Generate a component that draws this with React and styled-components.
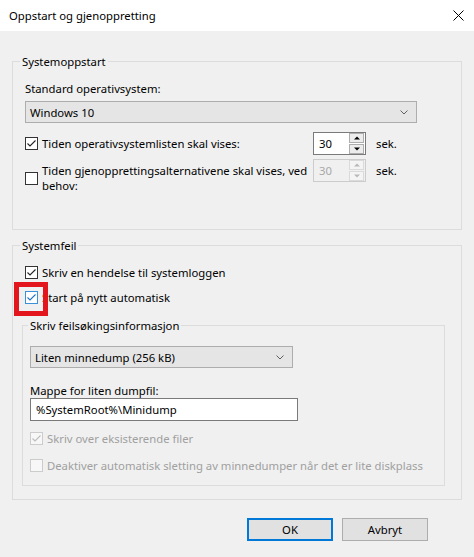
import React from 'react'
import styled, { createGlobalStyle } from 'styled-components'

const GlobalStyle = createGlobalStyle`
  html, body {
    margin: 0;
    padding: 0;
    background: #f0f0f0;
  }
  body {
    font-family: "Noto Sans", "Open Sans", sans-serif;
    font-size: 11.3px;
    color: #000;
  }
  * { box-sizing: border-box; }
`

const Window = styled.div`
  width: 474px;
  height: 557px;
  display: flex;
  flex-direction: column;
  background: #f0f0f0;
  overflow: hidden;
`

const TitleBar = styled.div`
  height: 31px;
  flex: none;
  background: #fff;
  display: flex;
  align-items: center;
  justify-content: space-between;
  padding: 0 10px 0 9px;
`

const Title = styled.span`
  line-height: 15px;
`

const Body = styled.div`
  padding: 23px 12px 0;
  display: flex;
  flex-direction: column;
`

const Group = styled.fieldset`
  margin: ${p => p.$margin || '0'};
  padding: 0;
  min-width: 0;
  border: 1px solid #dcdcdc;
`

const Legend = styled.legend`
  margin-left: ${p => p.$offset}px;
  padding: 0 2px;
  line-height: 15px;
`

const GroupContent = styled.div`
  padding: ${p => p.$pad};
  display: flex;
  flex-direction: column;
`

const FieldLabel = styled.div`
  line-height: ${p => p.$lh || 15}px;
  margin-top: ${p => p.$top || 0}px;
`

const Select = styled.div`
  width: ${p => p.$width}px;
  height: 22px;
  margin-top: ${p => p.$top || 0}px;
  display: flex;
  align-items: center;
  justify-content: space-between;
  padding: 0 8px 0 4px;
  background: #e5e5e5;
  border: 1px solid #adadad;
`

const TextBox = styled.div`
  width: ${p => p.$width}px;
  height: 23px;
  display: flex;
  align-items: center;
  padding-left: 5px;
  background: #fff;
  border: 1px solid #7a7a7a;
`

const Row = styled.div`
  display: flex;
  align-items: ${p => p.$align || 'center'};
  margin-top: ${p => p.$top || 0}px;
`

const CheckLabel = styled.div`
  display: flex;
  align-items: center;
  gap: 4px;
  width: ${p => (p.$width ? `${p.$width}px` : 'auto')};
  padding-top: ${p => p.$padTop || 0}px;
  margin-left: ${p => p.$left || 0}px;
  line-height: ${p => p.$lh || 17}px;
  white-space: nowrap;
  color: ${p => (p.$disabled ? '#a0a0a0' : '#000')};
`

const Box = styled.span`
  position: relative;
  flex: none;
  width: 13px;
  height: 13px;
  display: flex;
  align-items: center;
  justify-content: center;
  background: ${p => (p.$disabled ? '#f7f7f7' : '#fff')};
  border: 1px solid ${p => (p.$disabled ? '#cccccc' : p.$focus ? '#3c8fd8' : '#333333')};
`

const Highlight = styled.span`
  position: absolute;
  left: -12px;
  top: -10px;
  width: 34px;
  height: 34px;
  border: 5px solid #e3151d;
`

const Spin = styled.div`
  width: 53px;
  height: 23px;
  flex: none;
  display: flex;
  background: ${p => (p.$disabled ? '#f0f0f0' : '#fff')};
  border: 1px solid ${p => (p.$disabled ? '#cccccc' : '#7a7a7a')};
  color: ${p => (p.$disabled ? '#a8a8a8' : '#000')};
`

const SpinValue = styled.span`
  flex: 1;
  line-height: 21px;
  padding-left: 5px;
`

const SpinButtons = styled.div`
  width: 16px;
  display: flex;
  flex-direction: column;
  justify-content: space-between;
  padding: 0 1px 0 0;
`

const SpinButton = styled.span`
  height: 10px;
  display: flex;
  align-items: center;
  justify-content: center;
  background: ${p => (p.$disabled ? '#f4f4f4' : '#ececec')};
  border: 1px solid ${p => (p.$disabled ? '#dadada' : '#adadad')};
`

const Unit = styled.span`
  margin-left: 10px;
  line-height: 23px;
`

const ButtonRow = styled.div`
  display: flex;
  justify-content: flex-end;
  gap: 9px;
  margin-top: 18px;
  padding-right: 34px;
`

const Button = styled.button`
  width: 86px;
  height: 23px;
  padding: 0;
  font: inherit;
  color: #000;
  background: #e1e1e1;
  border: ${p => (p.$primary ? '2px solid #0078d7' : '1px solid #adadad')};
`

const Check = ({ color }) => (
  <svg width='11' height='11' viewBox='0 0 11 11'>
    <path d='M1.5 5.5 L4 8 L9.5 2.5' fill='none' stroke={color} strokeWidth='1.1' />
  </svg>
)

const Checkbox = ({ checked, disabled, focus, highlight }) => (
  <Box $disabled={disabled} $focus={focus}>
    {checked && <Check color={disabled ? '#bdbdbd' : focus ? '#1f73c7' : '#222'} />}
    {highlight && <Highlight />}
  </Box>
)

const Chevron = () => (
  <svg width='8' height='5' viewBox='0 0 8 5'>
    <path d='M0.5 0.5 L4 4 L7.5 0.5' fill='none' stroke='#606060' strokeWidth='1' />
  </svg>
)

const Arrow = ({ up, color }) => (
  <svg width='6' height='4' viewBox='0 0 6 4'>
    <path d={up ? 'M0 3.5 L3 0.5 L6 3.5 Z' : 'M0 0.5 L3 3.5 L6 0.5 Z'} fill={color} />
  </svg>
)

const SpinBox = ({ value, disabled }) => (
  <Spin $disabled={disabled}>
    <SpinValue>{value}</SpinValue>
    <SpinButtons>
      <SpinButton $disabled={disabled}><Arrow up color={disabled ? '#b8b8b8' : '#000'} /></SpinButton>
      <SpinButton $disabled={disabled}><Arrow color={disabled ? '#b8b8b8' : '#000'} /></SpinButton>
    </SpinButtons>
  </Spin>
)

const CloseIcon = () => (
  <svg width='11' height='11' viewBox='0 0 11 11'>
    <path d='M0.5 0.5 L10.5 10.5 M10.5 0.5 L0.5 10.5' stroke='#000' strokeWidth='1' />
  </svg>
)

export default function App () {
  return (
    <Window>
      <GlobalStyle />
      <TitleBar>
        <Title>{'Oppstart og gjenoppretting'}</Title>
        <CloseIcon />
      </TitleBar>
      <Body>
        <Group>
          <Legend $offset={7}>{'Systemoppstart'}</Legend>
          <GroupContent $pad='12px 12px 36px'>
            <FieldLabel>{'Standard operativsystem:'}</FieldLabel>
            <Select $width={392} $top={5}>
              <span>{'Windows 10'}</span>
              <Chevron />
            </Select>
            <Row $top={9}>
              <CheckLabel $width={288}>
                <Checkbox checked />
                <span>{'Tiden operativsystemlisten skal vises:'}</span>
              </CheckLabel>
              <SpinBox value='30' />
              <Unit>{'sek.'}</Unit>
            </Row>
            <Row $top={4} $align='flex-start'>
              <CheckLabel $width={288} $padTop={4} $lh={15}>
                <Checkbox />
                <span>{'Tiden gjenopprettingsalternativene skal vises, ved'}<br />{'behov:'}</span>
              </CheckLabel>
              <SpinBox value='30' disabled />
              <Unit>{'sek.'}</Unit>
            </Row>
          </GroupContent>
        </Group>

        <Group $margin='8px 0 0'>
          <Legend $offset={7}>{'Systemfeil'}</Legend>
          <GroupContent $pad='11px 16px 13px 9px'>
            <CheckLabel $left={3}>
              <Checkbox checked />
              <span>{'Skriv en hendelse til systemloggen'}</span>
            </CheckLabel>
            <Row $top={8}>
              <CheckLabel $left={3}>
                <Checkbox checked focus highlight />
                <span>{'Start på nytt automatisk'}</span>
              </CheckLabel>
            </Row>
            <Group $margin='12px 0 0'>
              <Legend $offset={5}>{'Skriv feilsøkingsinformasjon'}</Legend>
              <GroupContent $pad='13px 7px 11px'>
                <Select $width={263}>
                  <span>{'Liten minnedump (256 kB)'}</span>
                  <Chevron />
                </Select>
                <FieldLabel $top={16} $lh={14}>{'Mappe for liten dumpfil:'}</FieldLabel>
                <TextBox $width={268}>{'%SystemRoot%\\Minidump'}</TextBox>
                <Row $top={9}>
                  <CheckLabel $disabled>
                    <Checkbox checked disabled />
                    <span>{'Skriv over eksisterende filer'}</span>
                  </CheckLabel>
                </Row>
                <Row $top={10}>
                  <CheckLabel $disabled>
                    <Checkbox disabled />
                    <span>{'Deaktiver automatisk sletting av minnedumper når det er lite diskplass'}</span>
                  </CheckLabel>
                </Row>
              </GroupContent>
            </Group>
          </GroupContent>
        </Group>

        <ButtonRow>
          <Button $primary>{'OK'}</Button>
          <Button>{'Avbryt'}</Button>
        </ButtonRow>
      </Body>
    </Window>
  )
}
